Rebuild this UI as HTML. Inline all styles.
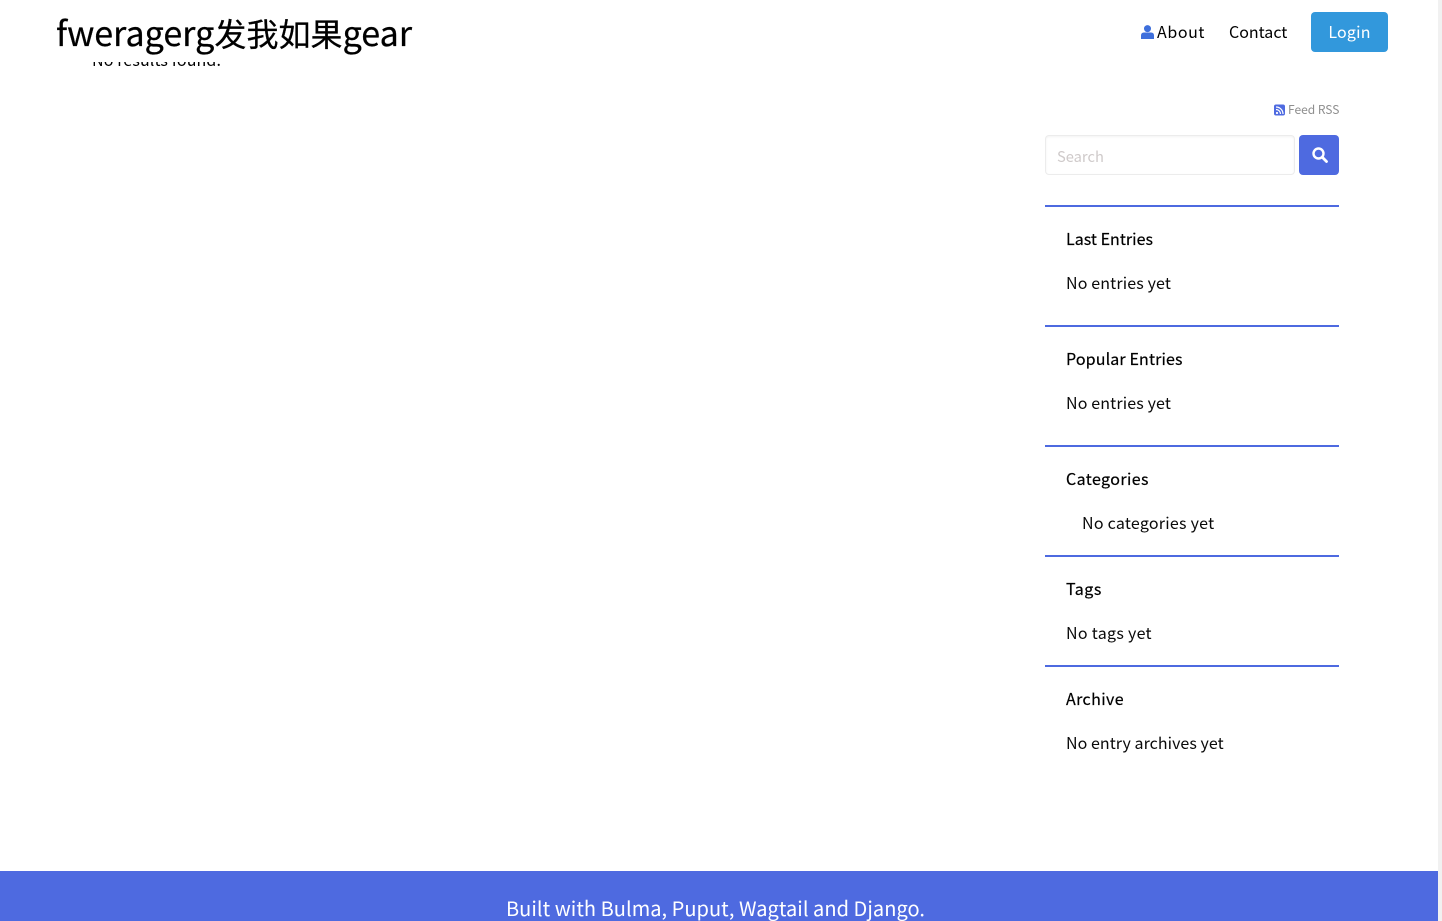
<!DOCTYPE html>
<html lang="en"><head><meta charset="utf-8"><title>fweragerg发我如果gear</title>
<style>
html,body{margin:0;padding:0;background:#fff}
body{width:1442px;height:921px;position:relative;overflow:hidden;font-family:"Noto Sans CJK SC","Liberation Sans",sans-serif;color:#0a0a0a}
.t{position:absolute;white-space:nowrap;line-height:24px;font-size:16px}
.r{position:absolute}
.hr{position:absolute;left:1045px;width:294px;height:2px;background:#4e6ae0}
.h{font-weight:400;color:#000;-webkit-text-stroke:.2px #000}
</style></head><body>
<div class="t" style="left:92px;top:47px;color:#000;letter-spacing:.12px">No results found.</div>
<div class="r" style="left:0;top:0;width:1438px;height:62px;background:#fff"></div>
<div class="t" style="left:56px;top:11px;font-size:32px;line-height:42px;color:#000;-webkit-text-stroke:.25px #000;letter-spacing:.05px"><span style="font-size:34px">fweragerg</span>发我如果<span style="font-size:34px">gear</span></div>
<svg class="r" style="left:1141px;top:25px" width="13" height="14" viewBox="0 0 13 14"><circle cx="6.5" cy="3.6" r="3.5" fill="#3e6fdc"/><path d="M0 14V10.500Q0 7.500 3 7.500H10Q13 7.500 13 10.500V14Z" fill="#3e6fdc"/></svg>
<div class="t" style="left:1157px;top:19px;color:#000;letter-spacing:.6px">About</div>
<div class="t" style="left:1229px;top:19px;color:#000">Contact</div>
<div class="r" style="left:1311px;top:12px;width:77px;height:40px;border-radius:4px;background:#3298dc"></div>
<div class="t" style="left:1311px;top:19px;width:77px;text-align:center;color:#fff;letter-spacing:.2px">Login</div>
<svg class="r" style="left:1274px;top:104px" width="11" height="12" viewBox="0 0 11 12"><rect y=".5" width="11" height="11" rx="2" fill="#4e6ae0"/><circle cx="3" cy="9" r="1.100" fill="#fff"/><path d="M2 5.500A4.500 4.500 0 0 1 6.500 10M2 3A7 7 0 0 1 9 10" fill="none" stroke="#fff" stroke-width="1.200"/></svg>
<div class="t" style="left:1288px;top:98px;font-size:12px;color:#8f8f8f">Feed RSS</div>
<div class="r" style="left:1045px;top:135px;width:248px;height:38px;border:1px solid #ececec;border-radius:4px;box-shadow:inset 0 1px 2px rgba(10,10,10,.05)"></div>
<div class="t" style="left:1057px;top:145px;color:#cfcaca;font-size:14.7px">Search</div>
<div class="r" style="left:1299px;top:135px;width:40px;height:40px;border-radius:4px;background:#4e6ae0"></div>
<svg class="r" style="left:1312px;top:147px" width="16" height="16" viewBox="0 0 16 16"><circle cx="6.500" cy="6.500" r="5" fill="none" stroke="#fff" stroke-width="2.400"/><path d="M10.300 10.300L14.500 14.500" stroke="#fff" stroke-width="2.800" stroke-linecap="round"/></svg>

<div class="hr" style="top:205px"></div>
<div class="t h" style="left:1066px;top:226px;letter-spacing:.03px">Last Entries</div>
<div class="t" style="left:1066px;top:270px;letter-spacing:.14px">No entries yet</div>
<div class="hr" style="top:325px"></div>
<div class="t h" style="left:1066px;top:346px;letter-spacing:.14px">Popular Entries</div>
<div class="t" style="left:1066px;top:390px;letter-spacing:.14px">No entries yet</div>
<div class="hr" style="top:445px"></div>
<div class="t h" style="left:1066px;top:466px;letter-spacing:.4px">Categories</div>
<div class="t" style="left:1082px;top:510px;letter-spacing:.25px">No categories yet</div>
<div class="hr" style="top:555px"></div>
<div class="t h" style="left:1066px;top:576px;letter-spacing:.5px">Tags</div>
<div class="t" style="left:1066px;top:620px;letter-spacing:.3px">No tags yet</div>
<div class="hr" style="top:665px"></div>
<div class="t h" style="left:1066px;top:686px;letter-spacing:.4px">Archive</div>
<div class="t" style="left:1066px;top:730px;letter-spacing:.05px">No entry archives yet</div>

<div class="r" style="left:0;top:871px;width:1438px;height:50px;background:#4e6ae0;overflow:hidden">
<div class="t" style="left:0;width:1431px;top:23px;font-size:20px;line-height:28px;text-align:center;color:#fff;letter-spacing:.04px">Built with Bulma, Puput, Wagtail and Django.</div></div>
<div class="r" style="left:1438px;top:0;width:4px;height:921px;background:#f1f1f1"></div>
</body></html>
